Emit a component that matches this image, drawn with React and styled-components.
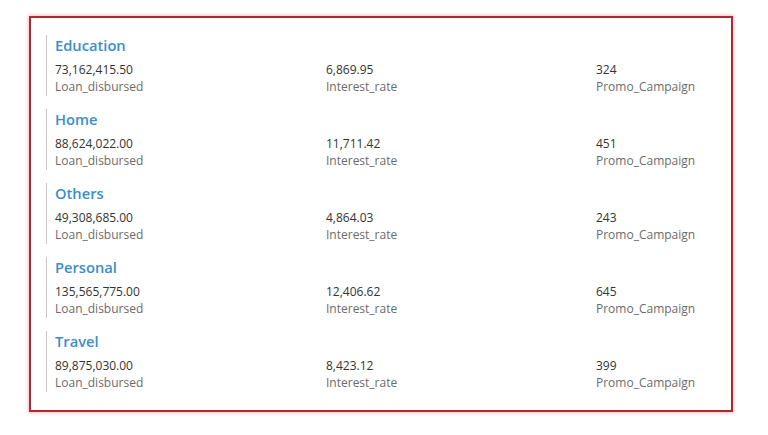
import React from "react";
import styled, { createGlobalStyle } from "styled-components";

const Global = createGlobalStyle`
  html, body { margin: 0; padding: 0; background: #ffffff; }
  body { font-family: "Open Sans", "Noto Sans", sans-serif; }
`;

const Page = styled.div`
  width: 768px;
  height: 435px;
  padding: 16px 0 0 29px;
  box-sizing: border-box;
`;

const Card = styled.div`
  width: 704px;
  height: 396px;
  box-sizing: border-box;
  border: 2px solid #ad2a30;
  box-shadow: 0 0 3px 1px rgba(230, 130, 135, 0.5);
  padding: 17px 15px 0 15px;
  display: flex;
  flex-direction: column;
  gap: 13px;
  background: #fff;
`;

const Block = styled.div`
  height: 61px;
  border-left: 1px solid #c8c8c8;
  padding: 1px 0 0 8px;
  box-sizing: border-box;
`;

const Title = styled.div`
  font-family: "Open Sans", sans-serif;
  font-weight: 600;
  font-size: 14.7px;
  line-height: 18px;
  color: #3a8dcf;
  margin-bottom: 7px;
`;

const Row = styled.div`
  display: grid;
  grid-template-columns: 271px 270px 1fr;
`;

const Metric = styled.div`
  display: flex;
  flex-direction: column;
`;

const Value = styled.span`
  font-size: 12px;
  line-height: 17px;
  color: #333;
`;

const Label = styled.span`
  font-size: 12px;
  line-height: 17px;
  color: #6b6b6b;
`;

const data = [
  ["Education", "73,162,415.50", "6,869.95", "324"],
  ["Home", "88,624,022.00", "11,711.42", "451"],
  ["Others", "49,308,685.00", "4,864.03", "243"],
  ["Personal", "135,565,775.00", "12,406.62", "645"],
  ["Travel", "89,875,030.00", "8,423.12", "399"],
];

const labels = ["Loan_disbursed", "Interest_rate", "Promo_Campaign"];

export default function App() {
  return (
    <>
      <Global />
      <Page>
        <Card>
          {data.map(([name, ...vals]) => (
            <Block key={name}>
              <Title>{name}</Title>
              <Row>
                {vals.map((v, i) => (
                  <Metric key={i}>
                    <Value>{v}</Value>
                    <Label>{labels[i]}</Label>
                  </Metric>
                ))}
              </Row>
            </Block>
          ))}
        </Card>
      </Page>
    </>
  );
}
